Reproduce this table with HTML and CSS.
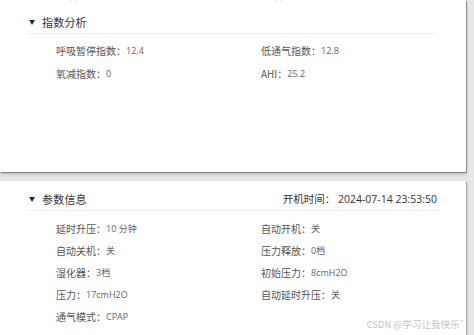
FILE: index.html
```html
<!DOCTYPE html>
<html lang="zh">
<head>
<meta charset="utf-8">
<link rel="stylesheet" href="styles.css">
</head>
<body>
<div class="page">
  <section class="card card-first">
    <div class="clip-row">
      <div class="grid clip-inner">
        <div class="item"><span class="value">60 次</span></div>
        <div class="item"><span class="value">12 次</span></div>
      </div>
    </div>
    <div class="head">
      <span class="tri">▼</span><span class="title">指数分析</span>
    </div>
    <div class="grid rows-a">
      <div class="item"><span class="label">呼吸暂停指数：</span><span class="value">12.4</span></div>
      <div class="item"><span class="label">低通气指数：</span><span class="value">12.8</span></div>
      <div class="item"><span class="label">氧减指数：</span><span class="value">0</span></div>
      <div class="item"><span class="label">AHI：</span><span class="value">25.2</span></div>
    </div>
  </section>
  <section class="card card-second">
    <div class="head head-second">
      <span class="tri">▼</span><span class="title">参数信息</span>
      <span class="time">开机时间： 2024-07-14 23:53:50</span>
    </div>
    <div class="grid rows-b">
      <div class="item"><span class="label">延时升压：</span><span class="value">10 分钟</span></div>
      <div class="item"><span class="label">自动开机：</span><span class="value">关</span></div>
      <div class="item"><span class="label">自动关机：</span><span class="value">关</span></div>
      <div class="item"><span class="label">压力释放：</span><span class="value">0档</span></div>
      <div class="item"><span class="label">湿化器：</span><span class="value">3档</span></div>
      <div class="item"><span class="label">初始压力：</span><span class="value">8cmH2O</span></div>
      <div class="item"><span class="label">压力：</span><span class="value">17cmH2O</span></div>
      <div class="item"><span class="label">自动延时升压：</span><span class="value">关</span></div>
      <div class="item"><span class="label">通气模式：</span><span class="value">CPAP</span></div>
    </div>
  </section>
  <div class="watermark">CSDN @学习让我快乐``</div>
</div>
</body>
</html>
```
FILE: styles.css
```css
* { box-sizing: border-box; }
html, body {
  margin: 0;
  padding: 0;
  height: 335px;
  overflow: hidden;
}
body {
  background: #e6e6e6;
  font-family: "Open Sans", "Noto Sans CJK SC", sans-serif;
  color: #555;
}
.page {
  position: relative;
  width: 474px;
  height: 335px;
  overflow: hidden;
}
.card {
  width: 466px;
  background: #fff;
  box-shadow: 1px 1px 2px rgba(0,0,0,0.35);
}
.card-first {
  height: 172px;
  box-shadow: 1px 1px 1px rgba(0,0,0,0.35), 0 3px 3px rgba(0,0,0,0.12);
}
.card-second {
  margin-top: 9px;
  height: 200px;
  padding-top: 6px;
}
.clip-row {
  height: 10px;
  overflow: hidden;
}
.clip-inner {
  margin-top: -15px;
  grid-auto-rows: 23px;
  padding-left: 80px;
  grid-template-columns: 195px 195px;
}
.clip-inner .value { color: #cfcfcf; font-family: "Noto Sans CJK SC", sans-serif; }
.head {
  display: flex;
  align-items: center;
  height: 24px;
  margin: 0 29px 0 28px;
  border-bottom: 1px solid #eeeeee;
  font-family: "Noto Sans CJK SC", sans-serif;
  color: #333;
  font-size: 11px;
}
.tri {
  font-size: 6px;
  width: 14px;
  padding-left: 1px;
  color: #222;
}
.title { letter-spacing: 0.2px; }
.time {
  margin-left: auto;
  font-size: 10.5px;
  color: #333;
  font-family: "Open Sans", "Noto Sans CJK SC", sans-serif;
}
.grid {
  display: grid;
  grid-template-columns: 205px 205px;
  padding-left: 56px;
  font-size: 10px;
}
.rows-a {
  padding-top: 5px;
  grid-auto-rows: 23px;
}
.rows-b {
  padding-top: 6px;
  grid-auto-rows: 22px;
}
.item {
  display: flex;
  align-items: center;
  white-space: nowrap;
}
.label {
  font-family: "Noto Sans CJK SC", sans-serif;
  color: #555;
}
.value {
  color: #666;
  font-size: 9px;
}
.watermark {
  position: absolute;
  right: 3px;
  bottom: 4px;
  font-size: 9.5px;
  color: #c4c4c4;
  font-family: "Noto Sans CJK SC", sans-serif;
}
```
